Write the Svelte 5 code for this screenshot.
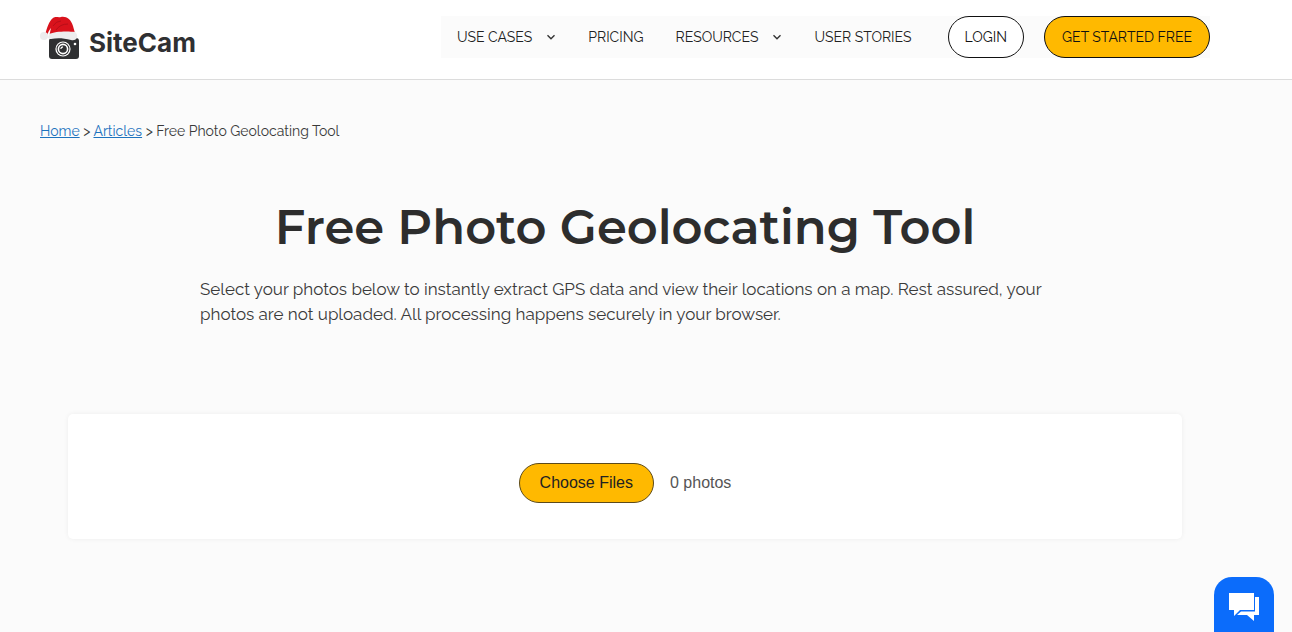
<script lang="ts">
  let picker: HTMLInputElement;
  let count = $state(0);

  const links = [
    { label: 'USE CASES', menu: true },
    { label: 'PRICING', menu: false },
    { label: 'RESOURCES', menu: true },
    { label: 'USER STORIES', menu: false }
  ];

  function onPick() {
    count = picker.files?.length ?? 0;
  }
</script>

<header>
  <div class="bar">
    <a class="logo" href="#home">
      <svg width="40" height="46" viewBox="0 0 40 46" aria-hidden="true">
        <rect x="14" y="21" width="10" height="5" rx="2" fill="#2f3032" />
        <rect x="9" y="22" width="30" height="21" rx="3" fill="#2f3032" />
        <circle cx="23" cy="33" r="7.6" fill="#fff" />
        <circle cx="23" cy="33" r="6.4" fill="#2f3032" />
        <circle cx="23" cy="33" r="4.6" fill="none" stroke="#fff" stroke-width="1.6" />
        <path d="M20.8 33A2.4 2.4 0 0 1 23 30.8" fill="none" stroke="#fff" stroke-width="1.2" />
        <circle cx="35" cy="28" r="1.3" fill="#fff" />
        <path d="M5 19C7 12 9 5 13 2C16 0 18 2 21 1C26 0 31 3 33 10L36 21C27 18 18 18 9 21L11 12C8 15 8 19 6 20Z" fill="#d9121c" />
        <path d="M13 10Q16 5 21 5M16 14Q20 8 28 8" fill="none" stroke="#b80e18" stroke-width="1" />
        <path d="M9 18C15 15 29 15 35 16Q38 18 37 22Q35 25 31 24C23 22 17 22 11 23Q8 23 8 21Z" fill="#ededee" />
        <circle cx="4" cy="20" r="4" fill="#ececee" />
      </svg>
      <span>SiteCam</span>
    </a>
    <nav>
      {#each links as link}
        <a href="#menu">
          {link.label}
          {#if link.menu}
            <svg width="10" height="10" viewBox="0 0 10 10" aria-hidden="true">
              <path d="M1.5 3.2L5 6.7L8.5 3.2" fill="none" stroke="#333" stroke-width="1.4" />
            </svg>
          {/if}
        </a>
      {/each}
      <a class="pill login" href="#login">LOGIN</a>
      <a class="pill start" href="#start">GET STARTED FREE</a>
    </nav>
  </div>
</header>

<main>
  <div class="crumbs">
    <a href="#home">Home</a> &gt; <a href="#articles">Articles</a> &gt; Free Photo Geolocating Tool
  </div>

  <section class="intro">
    <h1>Free Photo Geolocating Tool</h1>
    <p>
      Select your photos below to instantly extract GPS data and view their locations on a map. Rest
      assured, your photos are not uploaded. All processing happens securely in your browser.
    </p>
  </section>

  <section class="card">
    <input type="file" accept="image/*" multiple hidden aria-label="Photos" bind:this={picker} onchange={onPick} />
    <button class="choose" onclick={() => picker.click()}>Choose Files</button>
    <span>{count} photos</span>
  </section>
</main>

<button class="chat" aria-label="Open chat">
  <svg width="30" height="28" viewBox="0 0 30 28" aria-hidden="true">
    <path d="M0 0H25V17H11L5 23V17H0Z" fill="#fff" />
    <path d="M26 4H30V22H25V28L18 22H8L12 18.500H26Z" fill="#fff" />
  </svg>
</button>

<style>
  :global(body) {
    margin: 0;
    background: #fbfbfb;
    color: #3a3a3a;
    font-family: Raleway, Lato, sans-serif;
  }
  header {
    background: #fff;
    border-bottom: 1px solid #dcdcdc;
  }
  .bar {
    box-sizing: border-box;
    max-width: 1250px;
    padding: 16px 40px 21px;
    display: flex;
    justify-content: space-between;
    align-items: center;
  }
  .logo {
    display: flex;
    align-items: center;
    gap: 9px;
    height: 42px;
    color: #2f3032;
    font: 700 26px/42px Inter, sans-serif;
    text-decoration: none;
  }
  .logo svg {
    margin-top: 3px;
  }
  .logo span {
    padding-top: 12px;
  }
  nav {
    display: flex;
    align-items: center;
    background: #fbfbfb;
  }
  nav a {
    display: flex;
    align-items: center;
    padding: 0 16px;
    color: #222;
    font-size: 14px;
    line-height: 40px;
    text-decoration: none;
    white-space: nowrap;
  }
  nav a svg {
    margin-left: 14px;
  }
  nav .pill {
    margin-left: 20px;
    padding: 0 17px;
    border: 1px solid #111;
    border-radius: 21px;
    color: #111;
  }
  nav .login {
    padding: 0 16px;
    background: #fff;
  }
  .start {
    background: #ffb900;
  }
  main {
    box-sizing: border-box;
    max-width: 1250px;
    padding: 40px;
  }
  .crumbs {
    font-size: 14px;
    line-height: 22px;
  }
  .crumbs a {
    color: #1e73be;
  }
  .intro {
    max-width: 850px;
    margin: 56px auto 0;
  }
  h1 {
    margin: 0;
    color: #2d2d2d;
    font: 600 48px/58px Montserrat, Inter, sans-serif;
    text-align: center;
  }
  p {
    margin: 21px 0 0;
    font-size: 17px;
    line-height: 25px;
  }
  .card {
    display: flex;
    justify-content: center;
    align-items: center;
    gap: 16px;
    margin: 87px 28px 0;
    padding: 49px 0 36px;
    background: #fff;
    border-radius: 5px;
    box-shadow: 0 0 5px rgba(0, 0, 0, 0.06);
    color: #555;
    font: 16px/18px "Liberation Sans", Arial, sans-serif;
  }
  .choose {
    height: 40px;
    padding: 0 20px;
    background: #ffb900;
    border: 1px solid #5c4a1a;
    border-radius: 20px;
    color: #222;
    font: inherit;
  }
  .chat {
    position: fixed;
    right: 18px;
    bottom: 0;
    width: 60px;
    height: 55px;
    padding: 7px 0 0;
    background: #0b6cfb;
    border: 0;
    border-radius: 18px 18px 0 0;
  }
</style>
